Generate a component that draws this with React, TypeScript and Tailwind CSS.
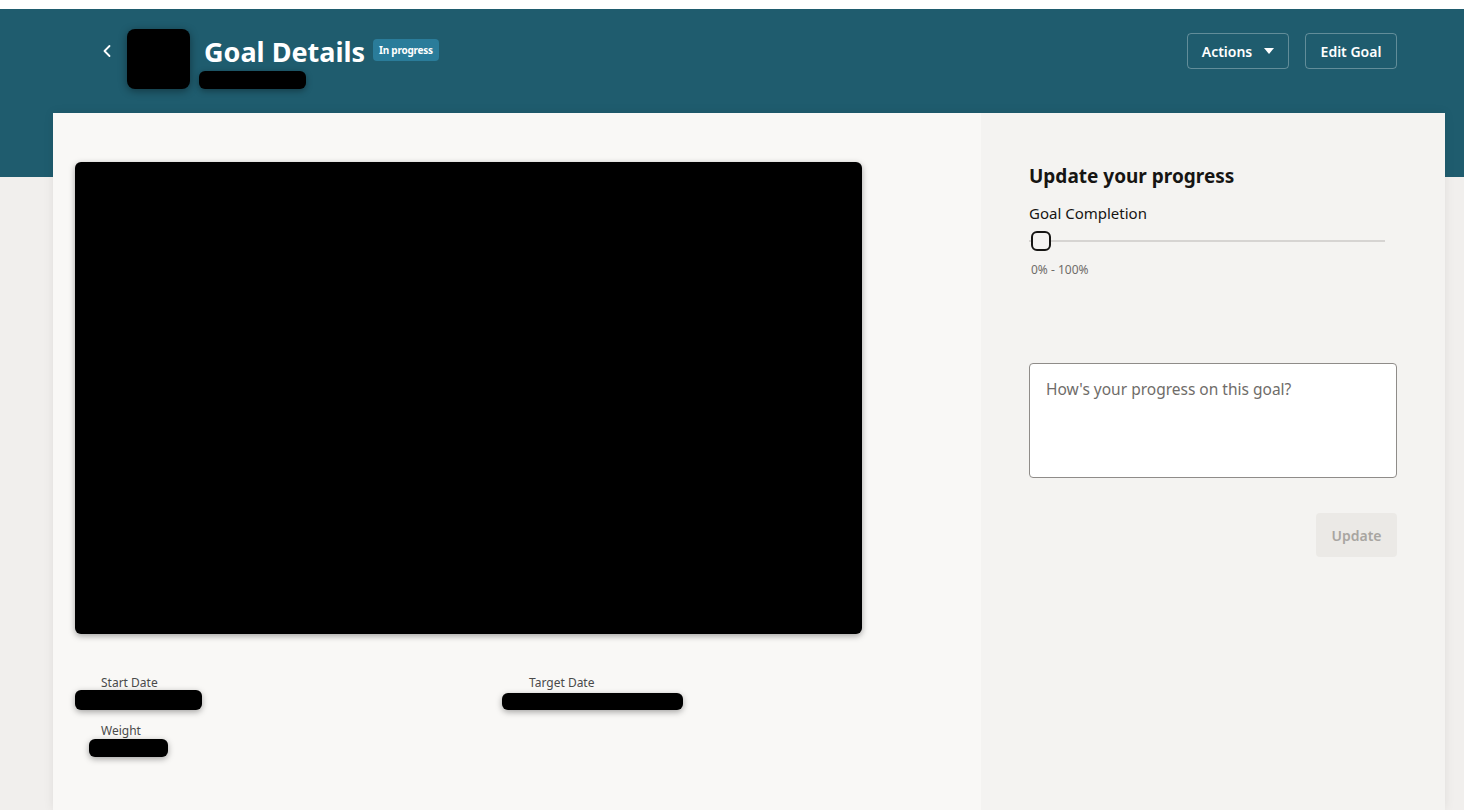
import { ChevronLeft } from "lucide-react";

const font = { fontFamily: '"Noto Sans", "Open Sans", sans-serif' };

function Redacted({ className }: { className: string }) {
  return <div className={`rounded-md bg-black shadow-[0_2px_6px_rgba(0,0,0,0.35)] ${className}`} />;
}

function Field({
  label,
  bar,
}: {
  label: string;
  bar: string;
}) {
  return (
    <div className="flex flex-col">
      <span className="pl-[26px] text-[12px] leading-[14px] text-[#4a4a4a]">{label}</span>
      <Redacted className={bar} />
    </div>
  );
}

export default function App() {
  return (
    <div className="min-h-screen bg-[#f1efed]" style={font}>
      <div className="h-[9px] bg-white" />
      <header className="h-[168px] bg-[#1f5c6e]">
        <div className="flex items-start justify-between pl-[97px] pr-[67px] pt-[20px]">
          <div className="flex items-start">
            <button type="button" className="mt-[12px] text-white" aria-label="Back">
              <ChevronLeft size={20} strokeWidth={2.2} />
            </button>
            <div className="ml-[10px] h-[60px] w-[63px] rounded-lg bg-black shadow-[0_2px_8px_rgba(0,0,0,0.4)]" />
            <div className="ml-[9px] flex flex-col">
              <div className="flex items-start">
                <h1 className="ml-[5px] mt-[5px] text-[27px] font-bold leading-[36px] text-white">
                  Goal Details
                </h1>
                <span className="ml-[8px] mt-[10px] rounded bg-[#2a7c9a] px-[6px] py-[4px] text-[10px] font-bold leading-[14px] tracking-tight text-white">
                  In progress
                </span>
              </div>
              <Redacted className="mt-[1px] h-[18px] w-[107px] rounded-lg" />
            </div>
          </div>
          <div className="mt-[4px] flex gap-4">
            <button
              type="button"
              className="flex h-[36px] w-[102px] items-center justify-center gap-3 rounded border border-white/30 text-[14px] font-semibold text-white"
            >
              Actions
              <svg width="10" height="6" viewBox="0 0 10 6">
                <path d="M0 0h10L5 6z" fill="white" />
              </svg>
            </button>
            <button
              type="button"
              className="flex h-[36px] w-[92px] items-center justify-center rounded border border-white/30 text-[14px] font-semibold text-white"
            >
              Edit Goal
            </button>
          </div>
        </div>
      </header>

      <main className="relative -mt-[64px] ml-[53px] flex min-h-[697px] w-[1392px] shadow-[0_0_10px_rgba(0,0,0,0.08)]">
        <section className="w-[928px] bg-[#f9f8f6] pl-[22px] pt-[49px]">
          <div className="h-[472px] w-[787px] rounded-md bg-black shadow-[0_2px_6px_rgba(0,0,0,0.35)]" />
          <div className="mt-[42px] grid w-[856px] grid-cols-2">
            <Field label="Start Date" bar="h-[20px] w-[127px] rounded-lg" />
            <div className="-ml-[1px]">
              <div className="flex flex-col">
                <span className="pl-[27px] text-[12px] leading-[14px] text-[#4a4a4a]">Target Date</span>
                <Redacted className="mt-[3px] h-[17px] w-[181px] rounded-lg" />
              </div>
            </div>
          </div>
          <div className="mt-[14px] flex flex-col">
            <span className="pl-[26px] text-[12px] leading-[14px] text-[#4a4a4a]">Weight</span>
            <Redacted className="ml-[14px] mt-[1px] h-[18px] w-[79px] rounded-lg" />
          </div>
        </section>

        <section className="flex-1 bg-[#f4f3f1] px-12 pt-[49px]">
          <h2 className="text-[19px] font-bold leading-[28px] text-[#161513]">Update your progress</h2>
          <p className="mt-[13px] text-[15px] leading-[20px] text-[#161513]">Goal Completion</p>
          <div className="relative mt-[8px] flex h-[20px] items-center">
            <div className="h-[2px] w-[356px] bg-[#d6d4d2]" />
            <div className="absolute left-[2px] top-0 h-[20px] w-[20px] rounded-md border-2 border-[#161513] bg-[#f4f3f1]" />
          </div>
          <p className="mt-[12px] pl-[2px] text-[12px] leading-[14px] text-[#6f6c69]">0% - 100%</p>
          <textarea
            placeholder="How's your progress on this goal?"
            className="mt-[86px] block h-[115px] w-full resize-none rounded border border-[#8f8c89] bg-white px-4 py-[14px] text-[15.5px] leading-[22px] text-[#161513] placeholder:text-[#6f6c69] focus:outline-none"
          />
          <div className="mt-[35px] flex justify-end">
            <button
              type="button"
              disabled
              className="h-[44px] w-[81px] rounded bg-[#ebe9e6] text-[14px] font-semibold text-[#a8a5a1]"
            >
              Update
            </button>
          </div>
        </section>
      </main>
    </div>
  );
}
